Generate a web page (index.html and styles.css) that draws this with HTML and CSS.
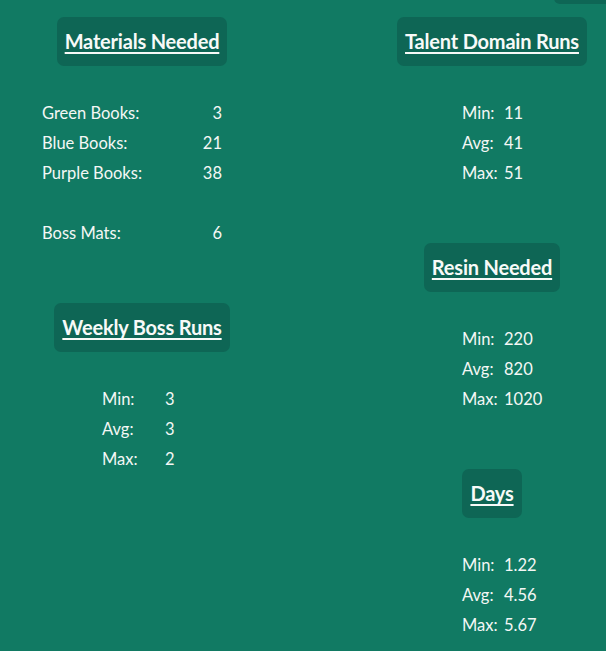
FILE: index.html
```html
<!DOCTYPE html>
<html>
<head>
<meta charset="utf-8">
<link rel="stylesheet" href="styles.css">
</head>
<body>
<div class="corner"></div>
<main class="page">
  <section class="col col-left">
    <div class="block">
      <h2 class="title"><a href="#">Materials Needed</a></h2>
      <div class="tbl tbl-mat">
        <span>Green Books:</span><span class="num">3</span>
        <span>Blue Books:</span><span class="num">21</span>
        <span>Purple Books:</span><span class="num">38</span>
        <span class="blank"></span><span class="blank"></span>
        <span>Boss Mats:</span><span class="num">6</span>
      </div>
    </div>
    <div class="block">
      <h2 class="title"><a href="#">Weekly Boss Runs</a></h2>
      <div class="tbl tbl-boss">
        <span>Min:</span><span>3</span>
        <span>Avg:</span><span>3</span>
        <span>Max:</span><span>2</span>
      </div>
    </div>
  </section>
  <section class="col col-right">
    <div class="block">
      <h2 class="title"><a href="#">Talent Domain Runs</a></h2>
      <div class="tbl tbl-r">
        <span>Min:</span><span>11</span>
        <span>Avg:</span><span>41</span>
        <span>Max:</span><span>51</span>
      </div>
    </div>
    <div class="block">
      <h2 class="title"><a href="#">Resin Needed</a></h2>
      <div class="tbl tbl-r">
        <span>Min:</span><span>220</span>
        <span>Avg:</span><span>820</span>
        <span>Max:</span><span>1020</span>
      </div>
    </div>
    <div class="block">
      <h2 class="title"><a href="#">Days</a></h2>
      <div class="tbl tbl-r">
        <span>Min:</span><span>1.22</span>
        <span>Avg:</span><span>4.56</span>
        <span>Max:</span><span>5.67</span>
      </div>
    </div>
  </section>
</main>
</body>
</html>
```
FILE: styles.css
```css
html, body {
  margin: 0;
  padding: 0;
  background: #117a63;
  color: #f4f7f5;
  font-family: Lato, "Open Sans", sans-serif;
  height: 100%;
  overflow: hidden;
}
.corner {
  position: absolute;
  top: -40px;
  right: 0;
  width: 52px;
  height: 44px;
  background: #0e6655;
  border-radius: 0 0 0 6px;
}
.page {
  display: flex;
  padding-top: 17px;
}
.col {
  display: flex;
  flex-direction: column;
}
.col-left { width: 284px; }
.col-right { width: 228px; margin-left: 94px; }
.block {
  display: flex;
  flex-direction: column;
  margin-bottom: 55px;
}
.block:last-child { margin-bottom: 0; }
.title {
  align-self: center;
  margin: 0;
  background: #0e6655;
  border-radius: 7px;
  padding: 10px 8px;
  font-size: 20px;
  line-height: 29px;
  font-weight: 700;
  letter-spacing: -0.2px;
}
.title a {
  color: #f7faf8;
  text-decoration: underline;
  text-decoration-thickness: 2px;
  text-underline-offset: 3px;
}
.tbl {
  display: grid;
  margin-top: 32px;
  grid-auto-rows: 30px;
  align-items: center;
  font-size: 16.5px;
  line-height: 20px;
}
.tbl-mat { grid-template-columns: 140px 40px; margin-left: 42px; }
.tbl-mat .num { text-align: right; }
.tbl-boss { grid-template-columns: 63px 40px; margin-left: 102px; }
.tbl-r { grid-template-columns: 42px 60px; margin-left: 84px; }
```
